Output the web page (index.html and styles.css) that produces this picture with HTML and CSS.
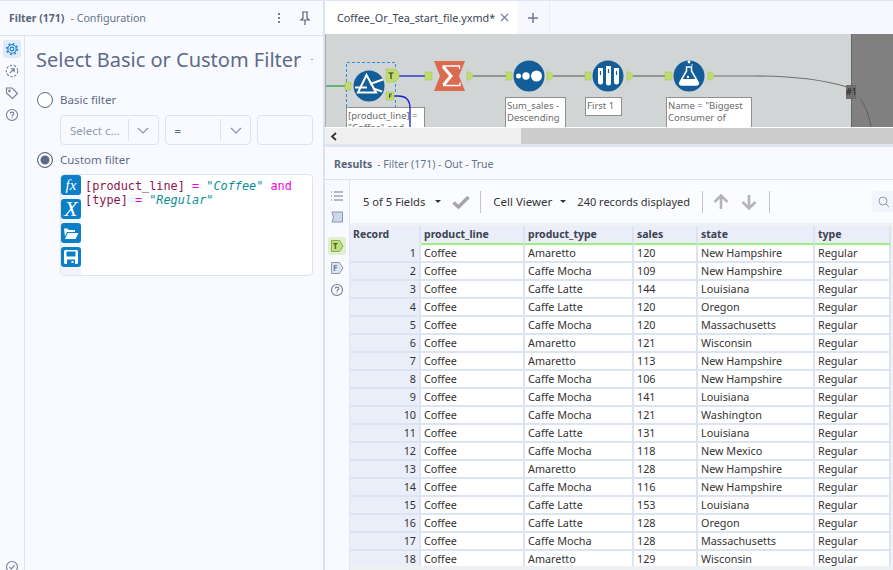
FILE: index.html
```html
<!DOCTYPE html>
<html lang="en">
<head>
<meta charset="utf-8">
<title>Filter Configuration</title>
<link rel="stylesheet" href="styles.css">
</head>
<body>
<div class="app">
  <aside class="config">
    <header class="config-head">
      <span class="head-title"><b>Filter (171)</b><span class="head-sub">- Configuration</span></span>
      <svg class="kebab" width="4" height="12" viewBox="0 0 4 12"><circle cx="2" cy="2" r="1.1"/><circle cx="2" cy="6" r="1.1"/><circle cx="2" cy="10" r="1.1"/></svg>
      <svg class="pin" width="12" height="14" viewBox="0 0 12 14"><path d="M3 1h6M4 1v6L2 9h8L8 7V1M6 9v5" /></svg>
    </header>
    <div class="config-body">
      <nav class="rail">
        <span class="rail-btn rail-on"><svg width="14" height="14" viewBox="0 0 14 14"><circle cx="7" cy="7" r="1.900" class="blue thin"/><circle cx="7" cy="7" r="4.200" class="blue thin"/><circle cx="7" cy="7" r="5.300" class="blue dash"/></svg></span>
        <span class="rail-btn"><svg width="14" height="14" viewBox="0 0 14 14"><circle cx="7" cy="7" r="5.7" class="grey dots"/><path d="M4.8 9.2 9 5M5.8 4.8H9.2V8.2" class="grey"/></svg></span>
        <span class="rail-btn"><svg width="14" height="14" viewBox="0 0 14 14"><path d="M1.5 2h5.5l5.5 5.5-5 5-6-5.5z" class="grey"/><circle cx="4.5" cy="4.8" r=".8" class="grey"/></svg></span>
        <span class="rail-btn"><svg width="14" height="14" viewBox="0 0 14 14"><circle cx="7" cy="7" r="5.5" class="grey"/><path d="M5.2 5.6C5.2 3.6 8.8 3.6 8.8 5.6 8.8 7 7 7 7 8.4M7 9.6v1" class="grey"/></svg></span>
        <span class="rail-end"><svg width="14" height="14" viewBox="0 0 14 14"><circle cx="7" cy="7" r="5.5" class="grey"/><path d="M4.5 7.2 6.3 9l3.2-3.6" class="grey"/></svg></span>
      </nav>
      <main class="form">
        <div class="form-title"><h1>Select Basic or Custom Filter</h1><i class="title-dash"></i></div>
        <label class="radio-row basic"><span class="radio"></span>Basic filter</label>
        <div class="selects">
          <div class="select s-col"><span class="sel-text muted">Select c...</span><span class="sel-arrow"><svg width="12" height="7" viewBox="0 0 12 7"><path d="M1 1l5 5 5-5"/></svg></span></div>
          <div class="select s-op"><span class="sel-text">=</span><span class="sel-arrow"><svg width="12" height="7" viewBox="0 0 12 7"><path d="M1 1l5 5 5-5"/></svg></span></div>
          <div class="select s-val"></div>
        </div>
        <label class="radio-row custom"><span class="radio checked"></span>Custom filter</label>
        <div class="editor">
          <div class="gutter">
            <span class="fn fn-text fx">fx</span>
            <span class="fn fn-text xx">X</span>
            <span class="fn"><svg width="16" height="14" viewBox="0 0 16 14"><path d="M1 2.500h3.500l1.500 1.500h6V6H4L2 10.500zM4.800 7H15.500l-3 6H2z" fill="#fff"/></svg></span>
            <span class="fn"><svg width="16" height="16" viewBox="0 0 16 16"><path d="M1 2.500A1.500 1.500 0 0 1 2.500 1h11A1.500 1.500 0 0 1 15 2.500v11a1.500 1.500 0 0 1-1.500 1.500h-11A1.500 1.500 0 0 1 1 13.500zM3.500 2.500v5h9v-5zM4 10.500V15h8v-4.500z" fill="#fff" fill-rule="evenodd"/><rect x="8.500" y="12" width="2" height="2" fill="#fff"/></svg></span>
          </div>
          <pre class="code"><span class="c-field">[product_line]</span> <span class="c-op">=</span> <span class="c-str">"Coffee"</span> <span class="c-op">and</span>
<span class="c-field">[type]</span> <span class="c-op">=</span> <span class="c-str">"Regular"</span></pre>
        </div>
      </main>
    </div>
  </aside>

  <section class="work">
    <div class="tabs">
      <div class="tab"><span>Coffee_Or_Tea_start_file.yxmd*</span><svg class="tab-x" width="9" height="9" viewBox="0 0 9 9"><path d="M1 1l7 7M8 1L1 8"/></svg></div>
      <div class="tab-add"><svg width="12" height="12" viewBox="0 0 12 12"><path d="M6 1v10M1 6h10"/></svg></div>
    </div>

    <div class="canvas">
      <div class="container-dark"></div>
      <div class="note n-filter">[product_line] =<br>"Coffee" and</div>
      <div class="note n-sum">Sum_sales -<br>Descending</div>
      <div class="note n-first">First 1</div>
      <div class="note n-name">Name = "Biggest<br>Consumer of</div>
      <svg class="wires" width="568" height="93" viewBox="325 34 568 93">
        <path d="M346.500 107V62.500h49V92M395.500 100v7" fill="none" stroke="#2f8fdc" stroke-dasharray="3 2"/>
        <path d="M325 86h21" stroke="#1f9a3f" fill="none" stroke-width="1.200"/>
        <path d="M399 76h27" stroke="#1a1fd0" fill="none" stroke-width="1.300"/>
        <path d="M394 96h4c8 0 12 4 12 12v20" stroke="#1a1fd0" fill="none" stroke-width="1.300"/>
        <path d="M473 76h33M553 76h32M633 76h32" stroke="#7d7d7d" fill="none" stroke-width="1.300"/>
        <path d="M714 76h40c40 0 70 4 93 11" stroke="#6f6f6f" fill="none" stroke-width="1.100"/>
        <path d="M860 99c5 6 9 15 11 28" stroke="#5f5f5f" fill="none"/>

        <circle cx="369" cy="86" r="15.500" fill="#135d99"/>
        <path d="M366.500 75 376 92.500h-18z" fill="none" stroke="#fff" stroke-width="2"/>
        <path d="M355 87.500h12M370 84l13-4.500M373 88.500l9 3" fill="none" stroke="#fff" stroke-width="2.200"/>

        <path d="M434 61h31l-6 15 6 15h-31l6-15z" fill="#dc6a4f"/>
        <path d="M443 66.500l8 9.500-7.500 9" fill="none" stroke="#fff" stroke-width="3"/>
        <path d="M442.500 66h17v3M443 85.500h17v-3" fill="none" stroke="#fff" stroke-width="1.300"/>

        <circle cx="529" cy="76" r="15.500" fill="#135d99"/>
        <circle cx="518.500" cy="76" r="2.500" fill="#fff"/><circle cx="526" cy="76" r="3.700" fill="#fff"/><circle cx="536.500" cy="76" r="5.500" fill="#fff"/>

        <circle cx="608" cy="76" r="15.500" fill="#135d99"/>
        <path d="M598 68h5v14a2.500 2.500 0 0 1-5 0zM606 66h5v17a2.500 2.500 0 0 1-5 0zM614 68h5v14a2.500 2.500 0 0 1-5 0z" fill="#fff"/>
        <path d="M600.500 71v4M608.500 69v4M616.500 71v4" stroke="#135d99" stroke-width="1.200"/>

        <circle cx="689" cy="76" r="15.500" fill="#135d99"/>
        <path d="M686.500 67h5v4l6.500 11c1 2 0 3-2 3h-14c-2 0-3-1-2-3l6.500-11z" fill="none" stroke="#fff" stroke-width="1.500"/>
        <path d="M682 79h14l2 4c0 1-1 2-2 2h-14c-1 0-2-1-2-2z" fill="#fff"/>
        <circle cx="688" cy="77" r="1.200" fill="#fff"/><circle cx="689" cy="62" r="1.400" fill="#fff"/><circle cx="692" cy="65" r=".8" fill="#fff"/>

        <path class="anchor" d="M345 82h6v8h-6zM425 72h7v8h-7zM506 72h6v8h-6zM585 72h6v8h-6zM665 72h7v8h-7z"/>
        <path class="anchor" d="M386 69h9l4 4v5l-4 4h-9zM386 92h8v8h-8z"/>
        <path class="anchor" d="M467 72h3l3 3v2l-3 3h-3zM547 72h3l3 3v2l-3 3h-3zM627 72h3l3 3v2l-3 3h-3zM708 72h3l3 3v2l-3 3h-3z"/>
        <path d="M388.500 73h5M391 73v6" stroke="#333" stroke-width="1.200" fill="none"/>
        <path d="M389.500 98v-4h2.500M389.500 96h2" stroke="#333" stroke-width=".8" fill="none"/>
        <rect x="846" y="85" width="10" height="14" fill="#6e6e6e"/>
      </svg>
      <span class="tag">#1</span>
    </div>

    <div class="hscroll"><span class="hs-left"><svg width="8" height="9" viewBox="0 0 8 9"><path d="M6 1 2 4.500 6 8"/></svg></span><span class="hs-thumb"></span></div>

    <div class="results">
      <header class="res-head"><b>Results</b><span class="res-sub">- Filter (171) - Out - True</span></header>
      <div class="res-body">
        <nav class="res-rail">
          <svg class="ri" width="14" height="12" viewBox="0 0 14 12"><path d="M1 2h1M4 2h9M1 6h1M4 6h9M1 10h1M4 10h9" class="rs"/></svg>
          <svg class="ri" width="14" height="14" viewBox="0 0 14 14"><path d="M2 2h10.500v10H2l1.500-5z" fill="#cdd8ec" stroke="#8a97b0"/></svg>
          <span class="out-t"><svg width="14" height="14" viewBox="0 0 14 14"><path d="M1.500 1.500h8l3.500 5.500-3.500 5.500h-8z" fill="#bfe07a" stroke="#8aa85a"/></svg><em>T</em></span>
          <span class="out-f"><svg width="14" height="14" viewBox="0 0 14 14"><path d="M1.500 1.500h8l3.500 5.500-3.500 5.500h-8z" fill="#dbe4f3" stroke="#8a97b0"/></svg><em>F</em></span>
          <svg class="ri" width="14" height="14" viewBox="0 0 14 14"><circle cx="7" cy="7" r="5.500" class="rs"/><path d="M5.200 5.600C5.200 3.600 8.800 3.600 8.800 5.600 8.800 7 7 7 7 8.400M7 9.600v1" class="rs"/></svg>
        </nav>
        <div class="res-main">
          <div class="toolbar">
            <span class="tb-fields">5 of 5 Fields</span>
            <i class="caret c1"></i>
            <svg class="check" width="18" height="14" viewBox="0 0 18 14"><path d="M1.500 7.500 6.500 12 16.500 2" fill="none" stroke="#a6a6a6" stroke-width="3.500"/></svg>
            <i class="tb-div d1"></i>
            <span class="tb-viewer">Cell Viewer</span>
            <i class="caret c2"></i>
            <span class="tb-count">240 records displayed</span>
            <i class="tb-div d2"></i>
            <svg class="arrow a1" width="18" height="18" viewBox="0 0 18 18"><path d="M9 16V3M2.500 9 9 2.500 15.500 9" fill="none" stroke="#b5b5b5" stroke-width="2.600"/></svg>
            <svg class="arrow a2" width="18" height="18" viewBox="0 0 18 18"><path d="M9 2v13M2.500 9 9 15.500 15.500 9" fill="none" stroke="#b5b5b5" stroke-width="2.600"/></svg>
            <i class="tb-div d3"></i>
            <span class="search"><svg width="12" height="12" viewBox="0 0 12 12"><circle cx="5" cy="5" r="4" fill="none" stroke="#8f9bb3"/><path d="M8 8l3 3" stroke="#8f9bb3"/></svg></span>
          </div>
          <div class="grid-wrap">
          <table class="grid">
            <colgroup><col class="w-rec"><col class="w-line"><col class="w-type"><col class="w-sales"><col class="w-state"><col class="w-t"></colgroup>
            <thead><tr><th class="th-rec">Record</th><th>product_line</th><th>product_type</th><th>sales</th><th>state</th><th>type</th></tr></thead>
            <tbody>
<tr><td class="rec">1</td><td>Coffee</td><td>Amaretto</td><td>120</td><td>New Hampshire</td><td>Regular</td></tr>
<tr><td class="rec">2</td><td>Coffee</td><td>Caffe Mocha</td><td>109</td><td>New Hampshire</td><td>Regular</td></tr>
<tr><td class="rec">3</td><td>Coffee</td><td>Caffe Latte</td><td>144</td><td>Louisiana</td><td>Regular</td></tr>
<tr><td class="rec">4</td><td>Coffee</td><td>Caffe Latte</td><td>120</td><td>Oregon</td><td>Regular</td></tr>
<tr><td class="rec">5</td><td>Coffee</td><td>Caffe Mocha</td><td>120</td><td>Massachusetts</td><td>Regular</td></tr>
<tr><td class="rec">6</td><td>Coffee</td><td>Amaretto</td><td>121</td><td>Wisconsin</td><td>Regular</td></tr>
<tr><td class="rec">7</td><td>Coffee</td><td>Amaretto</td><td>113</td><td>New Hampshire</td><td>Regular</td></tr>
<tr><td class="rec">8</td><td>Coffee</td><td>Caffe Mocha</td><td>106</td><td>New Hampshire</td><td>Regular</td></tr>
<tr><td class="rec">9</td><td>Coffee</td><td>Caffe Mocha</td><td>141</td><td>Louisiana</td><td>Regular</td></tr>
<tr><td class="rec">10</td><td>Coffee</td><td>Caffe Mocha</td><td>121</td><td>Washington</td><td>Regular</td></tr>
<tr><td class="rec">11</td><td>Coffee</td><td>Caffe Latte</td><td>131</td><td>Louisiana</td><td>Regular</td></tr>
<tr><td class="rec">12</td><td>Coffee</td><td>Caffe Mocha</td><td>118</td><td>New Mexico</td><td>Regular</td></tr>
<tr><td class="rec">13</td><td>Coffee</td><td>Amaretto</td><td>128</td><td>New Hampshire</td><td>Regular</td></tr>
<tr><td class="rec">14</td><td>Coffee</td><td>Caffe Mocha</td><td>116</td><td>New Hampshire</td><td>Regular</td></tr>
<tr><td class="rec">15</td><td>Coffee</td><td>Caffe Latte</td><td>153</td><td>Louisiana</td><td>Regular</td></tr>
<tr><td class="rec">16</td><td>Coffee</td><td>Caffe Latte</td><td>128</td><td>Oregon</td><td>Regular</td></tr>
<tr><td class="rec">17</td><td>Coffee</td><td>Caffe Mocha</td><td>128</td><td>Massachusetts</td><td>Regular</td></tr>
<tr><td class="rec">18</td><td>Coffee</td><td>Amaretto</td><td>129</td><td>Wisconsin</td><td>Regular</td></tr>
            </tbody>
          </table>
          </div>
          <div class="grid-foot"></div>
        </div>
      </div>
    </div>
  </section>
</div>
</body>
</html>
```
FILE: styles.css
```css
* { box-sizing: border-box; }
html, body { margin: 0; height: 100%; overflow: hidden; }
body { font-family: "Noto Sans", "Open Sans", sans-serif; font-size: 11px; color: #333; background: #f8faff; }
.app { display: flex; width: 893px; height: 570px; border-top: 1px solid #dfe6f3; overflow: hidden; }

/* configuration panel */
.config { width: 325px; flex: none; display: flex; flex-direction: column; border-right: 2px solid #dbe3f1; background: #f8faff; }
.config-head { height: 35px; flex: none; display: flex; align-items: center; padding: 0 12px 0 9px; border-bottom: 1px solid #dde5f2; color: #5f6b82; }
.head-title { flex: 1; font-size: 10.500px; }
.head-title b { color: #5b6478; font-weight: 700; }
.head-sub { margin-left: 6px; color: #67748c; font-size: 10.700px; }
.kebab { fill: #5b6478; margin-right: 18px; }
.pin { fill: none; stroke: #5b6478; stroke-width: 1.200; }
.config-body { flex: 1; display: flex; min-height: 0; }
.rail { position: relative; width: 25px; flex: none; border-right: 1px solid #dde5f2; padding: 4px 0 0 3px; display: flex; flex-direction: column; gap: 4px; }
.rail-btn { width: 18px; height: 18px; display: flex; align-items: center; justify-content: center; border-radius: 3px; }
.rail-on { background: #dfeaf9; }
.rail-end { position: absolute; left: 5px; bottom: -7px; }
.rail svg { fill: none; }
.blue { stroke: #1681cc; fill: none; }
.thin { stroke-width: 1.100; }
.dash { stroke-dasharray: 1.700 2.460; stroke-width: 1.700; }
.grey { stroke: #717d93; stroke-width: 1.100; fill: none; }
.dots { stroke-dasharray: 2.500 1.500; }

.form { flex: 1; padding: 0 10px; min-width: 0; }
.form-title { display: flex; align-items: center; height: 46px; padding-left: 1px; }
.form-title h1 { margin: 0; font-size: 20px; font-weight: 400; color: #5e6b87; white-space: nowrap; }
.title-dash { width: 2px; height: 1px; background: #9aa5b8; margin-left: 10px; }
.radio-row { display: flex; align-items: center; gap: 7px; height: 18px; font-size: 11.500px; color: #5e6b85; padding-left: 2px; }
.basic { margin-top: 8px; }
.radio { width: 16px; height: 16px; margin-bottom: -2px; border: 1.500px solid #5d6a85; border-radius: 50%; background: #fff; flex: none; }
.checked { background: #5d6a85; box-shadow: inset 0 0 0 2.500px #fff; }
.selects { display: flex; gap: 6px; margin: 7px 0 0 25px; height: 30px; }
.select { display: flex; align-items: center; background: #f8faff; border: 1px solid #dde4f0; border-radius: 4px; }
.s-col { width: 99px; }
.s-op { width: 87px; }
.s-val { width: 56px; }
.sel-text { flex: 1; padding-left: 9px; font-size: 11.500px; color: #5e6b85; white-space: nowrap; overflow: hidden; }
.muted { color: #8f9ab0; }
.sel-arrow { width: 30px; height: 22px; border-left: 1px solid #dde4f0; display: flex; align-items: center; justify-content: center; }
.sel-arrow svg { fill: none; stroke: #8593ad; stroke-width: 1.200; }
.custom { margin-top: 5px; }
.editor { display: flex; margin: 6px 0 0 25px; width: 253px; height: 102px; background: #fff; border: 1px solid #dde4f0; border-radius: 4px; overflow: hidden; }
.gutter { width: 20px; flex: none; background: #f1f4fa; display: flex; flex-direction: column; gap: 4px; }
.fn { width: 20px; height: 20px; border-radius: 3px; background: #0b7fc7; color: #fff; display: flex; align-items: center; justify-content: center; }
.fn-text { font-family: "Liberation Serif", serif; font-style: italic; }
.fx { font-size: 15px; }
.xx { font-size: 22px; font-weight: 400; }
.code { margin: 0; padding: 4px 0 0 4px; font-family: "DejaVu Sans Mono", monospace; font-size: 11.850px; line-height: 14px; white-space: pre; }
.c-field { color: #8b1450; }
.c-op { color: #f400e4; }
.c-str { color: #0c8d96; font-style: italic; }

/* workspace */
.work { flex: 1; min-width: 0; display: flex; flex-direction: column; }
.tabs { height: 33px; flex: none; display: flex; background: #f6f8fe; }
.tab { width: 192px; display: flex; align-items: center; gap: 5px; padding-left: 12px; background: #fff; font-size: 10.800px; color: #3c4454; white-space: nowrap; }
.tab-x { fill: none; stroke: #75829b; stroke-width: 1.200; }
.tab-add { width: 33px; display: flex; align-items: center; justify-content: center; border-right: 1px solid #e7ecf6; }
.tab-add svg { fill: none; stroke: #6f7a90; stroke-width: 1.500; }
.canvas { position: relative; height: 93px; flex: none; background: #d2d5d6; overflow: hidden; border-left: 1px solid #a9adae; }
.container-dark { position: absolute; left: 525px; top: 0; bottom: 0; right: 0; background: #808080; border-left: 1px solid #5d6b66; }
.wires { position: absolute; left: -1px; top: 0; }
.anchor { fill: #bfdc6a; stroke: #a6c05a; stroke-width: .5; }
.tag { position: absolute; left: 520px; top: 52px; font-size: 9px; color: #222; line-height: 12px; }
.note { position: absolute; background: #fff; border: 1px solid #8f8f8f; padding: 2px 1px; font-size: 9.500px; line-height: 12px; color: #6b6b6b; white-space: nowrap; overflow: hidden; }
.n-filter { left: 20px; top: 73px; width: 79px; height: 30px; }
.n-sum { left: 179px; top: 63px; width: 61px; height: 40px; }
.n-first { left: 259px; top: 63px; width: 37px; height: 19px; }
.n-name { left: 340px; top: 63px; width: 86px; height: 40px; }
.hscroll { height: 17px; flex: none; display: flex; background: #cdcdcd; border-top: 1px solid #fff; }
.hs-left { width: 196px; background: #f0f0f0; display: flex; align-items: center; padding-left: 5px; }
.hs-left svg { fill: none; stroke: #333; stroke-width: 1.800; }
.hs-thumb { flex: 1; }
.results { flex: 1; min-height: 0; display: flex; flex-direction: column; border-top: 3px solid #dfe6f3; }
.res-head { height: 33px; flex: none; display: flex; align-items: center; padding: 2px 0 0 9px; color: #67748c; font-size: 10.500px; border-bottom: 1px solid #dde5f2; }
.res-head b { color: #5b6478; }
.res-sub { margin-left: 5px; }
.res-body { flex: 1; min-height: 0; display: flex; }
.res-rail { width: 25px; flex: none; border-right: 1px solid #dde5f2; display: flex; flex-direction: column; align-items: center; padding-top: 10px; }
.ri { display: block; margin-bottom: 8px; }
.rs { fill: none; stroke: #717d93; stroke-width: 1.100; }
.out-t, .out-f { position: relative; width: 18px; height: 18px; display: flex; align-items: center; justify-content: center; border-radius: 3px; margin-bottom: 4px; }
.out-t { background: #dfefd0; margin-top: 5px; }
.out-f { margin-bottom: 6px; }
.out-t em, .out-f em { position: absolute; left: 5px; top: 3px; font-style: normal; font-size: 8px; font-weight: 700; color: #4c5a30; line-height: 11px; }
.out-f em { color: #6f7d98; }
.res-main { flex: 1; min-width: 0; display: flex; flex-direction: column; }
.toolbar { position: relative; height: 44px; flex: none; display: flex; align-items: center; border-radius: 4px 0 0 0; font-size: 11.500px; color: #333; padding-left: 13px; background: #fbfcff; border-bottom: 1px solid #eef1f8; white-space: nowrap; }
.tb-fields { font-size: 11.200px; }
.tb-count { font-size: 11px; margin-left: 11px; }
.caret { width: 0; height: 0; border: 3px solid transparent; border-top: 3px solid #333; margin-top: 3px; }
.c1 { margin-left: 10px; }
.check { margin-left: 11px; }
.tb-div { width: 1px; height: 22px; background: #c4c4c4; }
.d1 { margin-left: 10px; }
.tb-viewer { margin-left: 12px; }
.c2 { margin-left: 8px; }
.d2 { margin-left: 12px; }
.a1 { margin-left: 9px; }
.a2 { margin-left: 10px; }
.d3 { margin-left: 11px; }
.search { margin-left: auto; width: 21px; height: 21px; background: #f2f5fb; border-radius: 4px 0 0 4px; display: flex; align-items: center; justify-content: center; padding-left: 3px; }
.grid-wrap { flex: 1; min-height: 0; overflow: hidden; background: #eff1f5; padding-top: 2px; }
.grid-foot { height: 4px; flex: none; background: #eff0f2; }
.grid { border-collapse: separate; border-spacing: 0; table-layout: fixed; width: 541px; font-size: 10.800px; color: #333; }
.w-rec { width: 71px; } .w-line { width: 104px; } .w-type { width: 109px; } .w-sales { width: 64px; } .w-state { width: 117px; } .w-t { width: 76px; }
.grid th { height: 19px; background: #e9eef8; border-right: 2px solid #dde4f1; border-bottom: 2px solid #9fef7e; text-align: left; font-weight: 700; font-size: 10.500px; padding: 0 0 2px 3px; color: #3d4350; line-height: 14px; }
.grid th.th-rec { border-bottom-color: #e9eef8; }
.grid td { height: 18px; padding: 0 0 0 3px; background: #fff; border-right: 2px solid #dde4f1; border-bottom: 2px solid #dde4f1; line-height: 16px; overflow: hidden; white-space: nowrap; }
.grid td.rec { background: #e9eef8; text-align: right; padding: 0 3px 0 0; }
```
